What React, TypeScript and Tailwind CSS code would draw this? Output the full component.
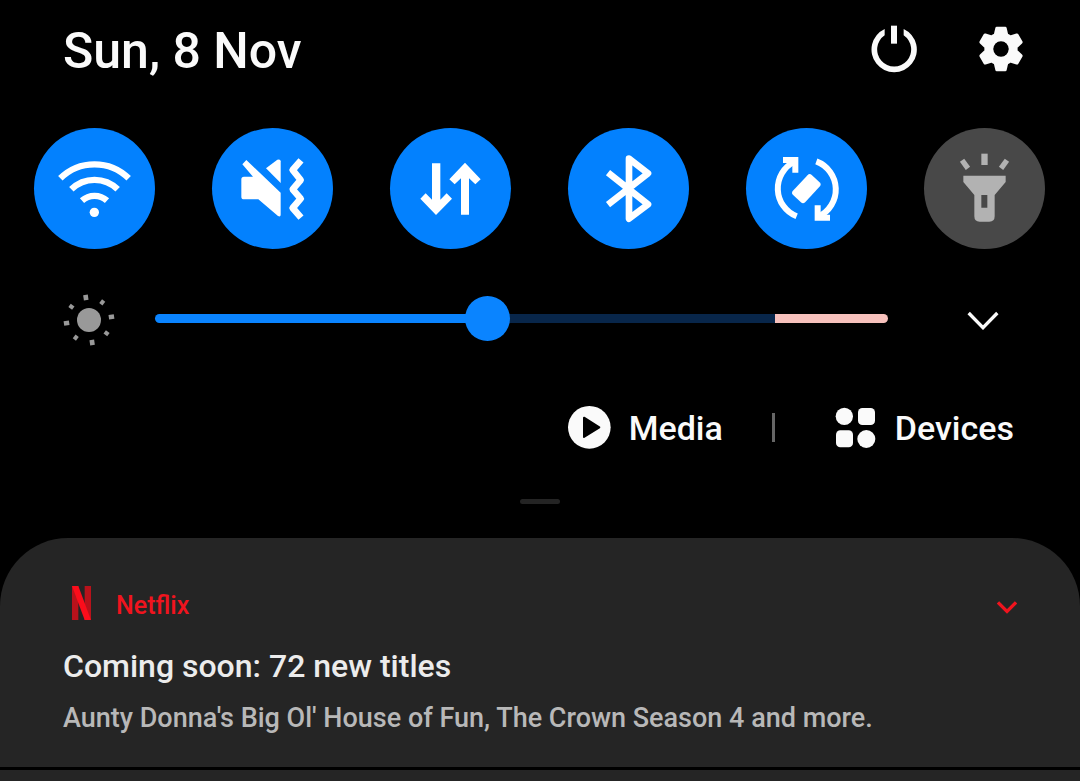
import { useState } from 'react';
import type { CSSProperties, ReactNode } from 'react';

interface QuickTile {
    id: string;
    label: string;
    viewBox: string;
    icon: ReactNode;
}

const tiles: QuickTile[] = [
    {
        id: 'wifi',
        label: 'Wi-Fi',
        viewBox: '30 28 363 363',
        icon: (
            <>
                <g fill="none" stroke="currentColor" strokeWidth="19">
                    <path d="M109 179A146 146 0 0 1 314 179" />
                    <path d="M142 212A99 99 0 0 1 281 212" />
                    <path d="M174 246A56 56 0 0 1 249 246" />
                </g>
                <circle cx="211" cy="281" r="14" fill="currentColor" />
            </>
        ),
    },
    {
        id: 'sound',
        label: 'Vibrate',
        viewBox: '564 28 363 363',
        icon: (
            <>
                <path
                    fill="currentColor"
                    d="M667 124L770 222V288Q770 296 762 292L703 242H660Q652 242 652 234V182Q652 174 660 174H687L655 137Z"
                />
                <path fill="currentColor" d="M726 149L760 123Q770 120 770 128V193Z" />
                <path
                    fill="none"
                    stroke="currentColor"
                    strokeWidth="20"
                    strokeLinejoin="round"
                    d="M831 125L806 154L830 184L806 212L830 240L806 268L831 297"
                />
            </>
        ),
    },
    {
        id: 'data',
        label: 'Mobile data',
        viewBox: '30 28 363 363',
        icon: (
            <g fill="currentColor">
                <path d="M121 240L137 224L156 243V134H181V243L200 224L216 240L168 289Z" />
                <path d="M255 132L302 182L286 197L267 179V288H243V179L224 197L208 182Z" />
            </g>
        ),
    },
    {
        id: 'bluetooth',
        label: 'Bluetooth',
        viewBox: '564 28 363 363',
        icon: (
            <path
                fill="none"
                stroke="currentColor"
                strokeWidth="20"
                strokeLinejoin="round"
                d="M684 162L804 257L747 300V120L804 164L684 258"
            />
        ),
    },
    {
        id: 'rotate',
        label: 'Auto rotate',
        viewBox: '30 28 363 363',
        icon: (
            <>
                <g fill="none" stroke="currentColor" strokeWidth="18">
                    <path d="M182 293A90 90 0 0 1 175 129" />
                    <path d="M141 124H178V162" />
                    <path d="M241 128A90 90 0 0 1 247 294" />
                    <path d="M282 297H245V260" />
                </g>
                <rect x="-25" y="-41" width="50" height="82" rx="9" fill="currentColor" transform="translate(211 210) rotate(43)" />
            </>
        ),
    },
    {
        id: 'torch',
        label: 'Torch',
        viewBox: '564 28 363 363',
        icon: (
            <g fill="currentColor">
                <path
                    fillRule="evenodd"
                    d="M682 171H809V190L776 229V293Q776 309 760 309H731Q715 309 715 293V229L682 190ZM736 229V267H754V229Z"
                />
                <rect x="736" y="105" width="19" height="34" />
                <rect x="-8" y="-15" width="16" height="30" transform="translate(687 137) rotate(-36)" />
                <rect x="-8" y="-15" width="16" height="30" transform="translate(804 137) rotate(36)" />
            </g>
        ),
    },
];

const MAX_BRIGHTNESS = 255;

function PowerIcon() {
    return (
        <svg viewBox="61 45 144 144" className="size-12" fill="currentColor" aria-hidden="true">
            <path d="M105 57A68 68 0 1 0 162 57V76A51 51 0 1 1 105 76Z" />
            <rect x="124" y="47" width="18" height="54" />
        </svg>
    );
}

function GearIcon() {
    return (
        <svg viewBox="-72 -72 144 144" className="size-12" fill="currentColor" aria-hidden="true">
            {[0, 60, 120, 180, 240, 300].map((angle) => (
                <path key={angle} transform={`rotate(${angle})`} d="M-13 -67H13Q16 -67 17 -63L21 -46L10 -20H-10L-21 -46L-17 -63Q-16 -67 -13 -67Z" />
            ))}
            <circle r="36" fill="none" stroke="currentColor" strokeWidth="28" />
            <circle r="23" fill="#000" />
        </svg>
    );
}

function SunIcon() {
    return (
        <svg viewBox="-78 -78 156 156" className="size-[52px]" fill="currentColor" aria-hidden="true">
            <circle r="36" />
            {[-8, 82, 172, 262].map((angle) => (
                <rect key={angle} x="-7" y="-76" width="14" height="16" transform={`rotate(${angle})`} />
            ))}
            {[37, 127, 217, 307].map((angle) => (
                <rect key={angle} x="-6" y="-73" width="12" height="14" transform={`rotate(${angle})`} />
            ))}
        </svg>
    );
}

function MediaIcon() {
    return (
        <svg viewBox="0 0 129 129" className="size-[43px]" aria-hidden="true">
            <circle cx="64" cy="64" r="64" fill="currentColor" />
            <path d="M48 35L94 64L48 93Z" fill="#000" stroke="#000" strokeWidth="6" strokeLinejoin="round" />
        </svg>
    );
}

function DevicesIcon() {
    return (
        <svg viewBox="855 50 123 123" className="size-[41px]" fill="currentColor" aria-hidden="true">
            <circle cx="883" cy="78" r="26" />
            <rect x="924" y="53" width="51" height="51" rx="13" />
            <rect x="858" y="120" width="51" height="51" rx="13" />
            <circle cx="949" cy="146" r="27" />
        </svg>
    );
}

function NetflixIcon() {
    return (
        <svg viewBox="0 0 57 102" className="h-[34px] w-[19px]" aria-hidden="true">
            <path d="M0 0H19V102H0ZM38 0H57V102H38Z" fill="#b9121b" />
            <path d="M0 0H19L57 102H38Z" fill="#fb0d1b" />
        </svg>
    );
}

export default function App() {
    const [active, setActive] = useState<string[]>(['wifi', 'sound', 'data', 'bluetooth', 'rotate']);
    const [brightness, setBrightness] = useState(115);

    const toggleTile = (id: string) => {
        setActive(active.includes(id) ? active.filter((t) => t !== id) : [...active, id]);
    };

    // The thumb is 45px wide, so the filled part ends at its centre
    const ratio = brightness / MAX_BRIGHTNESS;
    const fill = `calc(${ratio * 100}% + ${(0.5 - ratio) * 45}px)`;
    const track = `linear-gradient(to right, #0a84ff ${fill}, #08264a ${fill}, #08264a 84.6%, #f7c1bc 84.6%)`;

    return (
        <div className="flex min-h-screen flex-col bg-black font-['Roboto',sans-serif] font-medium text-[#fafafa]">
            <header className="flex h-[98px] items-center justify-between pr-[55px] pl-[63px]">
                <h1 className="pt-1 text-[50px] leading-none font-medium">Sun, 8 Nov</h1>
                <div className="flex items-center gap-[59px]">
                    <button type="button" aria-label="Power">
                        <PowerIcon />
                    </button>
                    <button type="button" aria-label="Settings">
                        <GearIcon />
                    </button>
                </div>
            </header>

            {/* Quick settings */}
            <div className="mt-[30px] flex justify-between pr-[35px] pl-[34px]">
                {tiles.map((tile) => {
                    const on = active.includes(tile.id);
                    return (
                        <button
                            key={tile.id}
                            type="button"
                            aria-label={tile.label}
                            aria-pressed={on}
                            onClick={() => toggleTile(tile.id)}
                            className={`size-[121px] rounded-full ${on ? 'bg-[#0381fe] text-white' : 'bg-[#484848] text-[#b2b2b2]'}`}
                        >
                            <svg viewBox={tile.viewBox} className="size-full" aria-hidden="true">
                                {tile.icon}
                            </svg>
                        </button>
                    );
                })}
            </div>

            {/* Brightness */}
            <div className="mt-[45px] flex h-12 items-center pr-[81px] pl-[63px]">
                <label htmlFor="brightness" aria-label="Brightness" className="pt-1 text-[#999999]">
                    <SunIcon />
                </label>
                <input
                    id="brightness"
                    type="range"
                    min={0}
                    max={MAX_BRIGHTNESS}
                    value={brightness}
                    onChange={(e) => setBrightness(Number(e.target.value))}
                    style={{ '--track': track } as CSSProperties}
                    className="mr-[79px] ml-10 h-[45px] min-w-0 flex-1 appearance-none bg-transparent [&::-webkit-slider-runnable-track]:h-[9px] [&::-webkit-slider-runnable-track]:rounded-full [&::-webkit-slider-runnable-track]:[background:var(--track)] [&::-webkit-slider-thumb]:-mt-[18px] [&::-webkit-slider-thumb]:size-[45px] [&::-webkit-slider-thumb]:appearance-none [&::-webkit-slider-thumb]:rounded-full [&::-webkit-slider-thumb]:bg-[#0a84ff]"
                />
                <button type="button" aria-label="Brightness options" className="pt-1">
                    <svg viewBox="0 0 96 60" className="h-5 w-8" fill="none" stroke="currentColor" strokeWidth="10" aria-hidden="true">
                        <path d="M5 9L48 53L91 9" />
                    </svg>
                </button>
            </div>

            <div className="mt-16 flex h-[43px] items-center justify-end pr-[66px] text-[34px] leading-10">
                <button type="button" className="flex items-center gap-[18px]">
                    <MediaIcon />
                    <span>Media</span>
                </button>
                <div className="mr-[60px] ml-[49px] h-[29px] w-[3px] bg-[#666666]" />
                <button type="button" className="flex items-center gap-[19px]">
                    <DevicesIcon />
                    <span>Devices</span>
                </button>
            </div>

            <div className="mx-auto mt-[50px] h-[5px] w-10 rounded-full bg-[#242424]" />

            {/* Notifications */}
            <main className="mt-[34px] flex flex-1 flex-col gap-[3px]">
                <article className="rounded-t-[68px] bg-[#252525] px-[63px] pt-12 pb-[29px]">
                    <div className="flex h-[34px] items-center">
                        <div className="ml-[9px]">
                            <NetflixIcon />
                        </div>
                        <span className="ml-[25px] pt-1.5 text-[25px] leading-8 text-[#f0141e]">Netflix</span>
                        <button type="button" aria-label="Expand" className="ml-auto pt-2 text-[#f0141e]">
                            <svg viewBox="0 0 60 39" className="h-[13px] w-5" fill="none" stroke="currentColor" strokeWidth="10" aria-hidden="true">
                                <path d="M3 4L30 31L57 4" />
                            </svg>
                        </button>
                    </div>
                    <h2 className="mt-[26px] text-[32px] leading-10 font-medium text-[#ececec]">Coming soon: 72 new titles</h2>
                    <p className="mt-3 text-[27px] leading-10 text-[#b8b8b8]">
                        Aunty Donna's Big Ol' House of Fun, The Crown Season 4 and more.
                    </p>
                </article>
                <div className="flex-1 bg-[#252525]" />
            </main>
        </div>
    );
}
